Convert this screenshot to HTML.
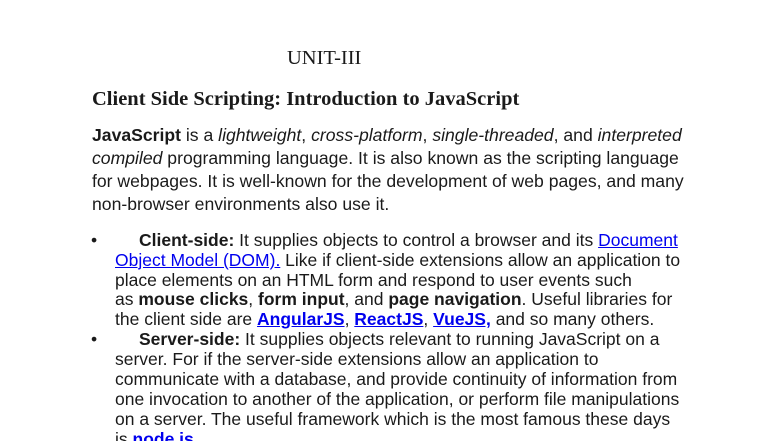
<!DOCTYPE html>
<html><head><meta charset="utf-8"><style>
html,body{margin:0;padding:0;background:#fff;width:784px;height:441px;overflow:hidden;position:relative}
.l{position:absolute;white-space:nowrap;color:#1a1a1a}
.s{font-family:"Liberation Sans",Arial,sans-serif}
.t{font-family:"Liberation Serif","Times New Roman",serif}
a{color:#0000ee;text-decoration:underline}
b{font-weight:bold}
.p{font-size:17.6px;line-height:17px}
.b{font-size:17.5px;line-height:16px}
</style></head><body>
<div class="l t" style="left:287px;top:49px;font-size:20.5px;line-height:19px">UNIT-III</div>
<div class="l t" style="left:92px;top:89px;font-size:20.5px;line-height:20px;font-weight:bold">Client Side Scripting: Introduction to JavaScript</div>

<div class="l s p" style="left:92px;top:127px"><b>JavaScript</b> is a <i>lightweight</i>, <i>cross-platform</i>, <i>single-threaded</i>, and <i>interpreted</i></div>
<div class="l s p" style="left:92px;top:150px"><i>compiled</i> programming language. It is also known as the scripting language</div>
<div class="l s p" style="left:92px;top:173px">for webpages. It is well-known for the development of web pages, and many</div>
<div class="l s p" style="left:92px;top:196px">non-browser environments also use it.</div>

<div class="l s b" style="left:91px;top:232px">•</div>
<div class="l s b" style="left:139px;top:232px"><b>Client-side:</b> It supplies objects to control a browser and its <a>Document </a></div>
<div class="l s b" style="left:115px;top:252px"><a>Object Model (DOM).</a> Like if client-side extensions allow an application to</div>
<div class="l s b" style="left:115px;top:272px">place elements on an HTML form and respond to user events such</div>
<div class="l s b" style="left:115px;top:291px">as <b>mouse clicks</b>, <b>form input</b>, and <b>page navigation</b>. Useful libraries for</div>
<div class="l s b" style="left:115px;top:311px">the client side are <a><b>AngularJS</b></a>, <a><b>ReactJS</b></a>, <a><b>VueJS,</b></a> and so many others.</div>
<div class="l s b" style="left:91px;top:331px">•</div>
<div class="l s b" style="left:139px;top:331px"><b>Server-side:</b> It supplies objects relevant to running JavaScript on a</div>
<div class="l s b" style="left:115px;top:351px">server. For if the server-side extensions allow an application to</div>
<div class="l s b" style="left:115px;top:371px">communicate with a database, and provide continuity of information from</div>
<div class="l s b" style="left:115px;top:391px">one invocation to another of the application, or perform file manipulations</div>
<div class="l s b" style="left:115px;top:411px">on a server. The useful framework which is the most famous these days</div>
<div class="l s b" style="left:115px;top:431px">is <a><b>node.js</b></a>.</div>
</body></html>
